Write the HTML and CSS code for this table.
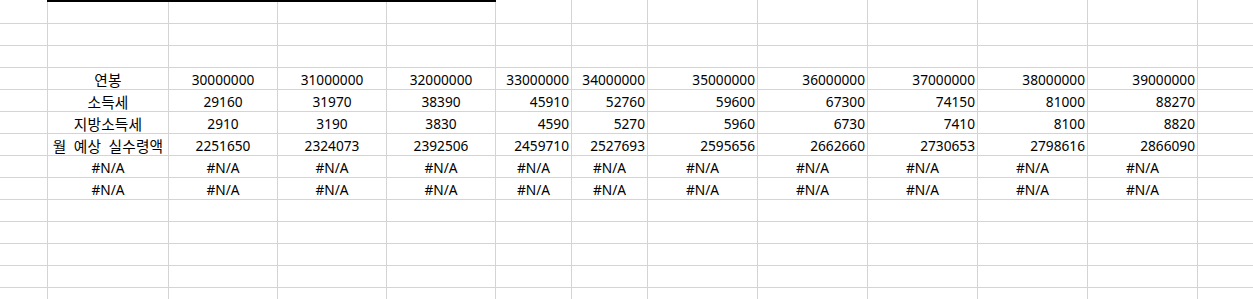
FILE: index.html
```html
<!DOCTYPE html>
<html lang="ko">
<head>
<meta charset="utf-8">
<title>Sheet</title>
<link rel="stylesheet" href="styles.css">
</head>
<body>
<div class="sheet">
  <!-- row 0 -->
  <div class="c"></div><div class="c a2"></div><div class="c a3"></div><div class="c a4"></div><div class="c a5"></div><div class="c"></div><div class="c"></div><div class="c"></div><div class="c"></div><div class="c"></div><div class="c"></div><div class="c"></div><div class="c"></div>
  <div class="topline"></div>
  <!-- row 1 -->
  <div class="c"></div><div class="c"></div><div class="c"></div><div class="c"></div><div class="c"></div><div class="c"></div><div class="c"></div><div class="c"></div><div class="c"></div><div class="c"></div><div class="c"></div><div class="c"></div><div class="c"></div>
  <!-- row 2 -->
  <div class="c"></div><div class="c"></div><div class="c"></div><div class="c"></div><div class="c"></div><div class="c"></div><div class="c"></div><div class="c"></div><div class="c"></div><div class="c"></div><div class="c"></div><div class="c"></div><div class="c"></div>
  <!-- 연봉 -->
  <div class="c"></div>
  <div class="c ctr ko">연봉</div>
  <div class="c ctr">30000000</div><div class="c ctr">31000000</div><div class="c ctr">32000000</div>
  <div class="c num">33000000</div><div class="c num">34000000</div><div class="c num">35000000</div><div class="c num">36000000</div><div class="c num">37000000</div><div class="c num">38000000</div><div class="c num">39000000</div>
  <div class="c"></div>
  <!-- 소득세 -->
  <div class="c"></div>
  <div class="c ctr ko">소득세</div>
  <div class="c ctr">29160</div><div class="c ctr">31970</div><div class="c ctr">38390</div>
  <div class="c num">45910</div><div class="c num">52760</div><div class="c num">59600</div><div class="c num">67300</div><div class="c num">74150</div><div class="c num">81000</div><div class="c num">88270</div>
  <div class="c"></div>
  <!-- 지방소득세 -->
  <div class="c"></div>
  <div class="c ctr ko">지방소득세</div>
  <div class="c ctr">2910</div><div class="c ctr">3190</div><div class="c ctr">3830</div>
  <div class="c num">4590</div><div class="c num">5270</div><div class="c num">5960</div><div class="c num">6730</div><div class="c num">7410</div><div class="c num">8100</div><div class="c num">8820</div>
  <div class="c"></div>
  <!-- 월 예상 실수령액 -->
  <div class="c"></div>
  <div class="c ctr ko">월 예상 실수령액</div>
  <div class="c ctr">2251650</div><div class="c ctr">2324073</div><div class="c ctr">2392506</div>
  <div class="c num">2459710</div><div class="c num">2527693</div><div class="c num">2595656</div><div class="c num">2662660</div><div class="c num">2730653</div><div class="c num">2798616</div><div class="c num">2866090</div>
  <div class="c"></div>
  <!-- #N/A -->
  <div class="c"></div>
  <div class="c ctr">#N/A</div><div class="c ctr">#N/A</div><div class="c ctr">#N/A</div><div class="c ctr">#N/A</div><div class="c ctr">#N/A</div><div class="c ctr">#N/A</div><div class="c ctr">#N/A</div><div class="c ctr">#N/A</div><div class="c ctr">#N/A</div><div class="c ctr">#N/A</div><div class="c ctr">#N/A</div>
  <div class="c"></div>
  <!-- #N/A -->
  <div class="c"></div>
  <div class="c ctr">#N/A</div><div class="c ctr">#N/A</div><div class="c ctr">#N/A</div><div class="c ctr">#N/A</div><div class="c ctr">#N/A</div><div class="c ctr">#N/A</div><div class="c ctr">#N/A</div><div class="c ctr">#N/A</div><div class="c ctr">#N/A</div><div class="c ctr">#N/A</div><div class="c ctr">#N/A</div>
  <div class="c"></div>
  <!-- empty rows -->
  <div class="c"></div><div class="c"></div><div class="c"></div><div class="c"></div><div class="c"></div><div class="c"></div><div class="c"></div><div class="c"></div><div class="c"></div><div class="c"></div><div class="c"></div><div class="c"></div><div class="c"></div>
  <div class="c"></div><div class="c"></div><div class="c"></div><div class="c"></div><div class="c"></div><div class="c"></div><div class="c"></div><div class="c"></div><div class="c"></div><div class="c"></div><div class="c"></div><div class="c"></div><div class="c"></div>
  <div class="c"></div><div class="c"></div><div class="c"></div><div class="c"></div><div class="c"></div><div class="c"></div><div class="c"></div><div class="c"></div><div class="c"></div><div class="c"></div><div class="c"></div><div class="c"></div><div class="c"></div>
  <div class="c"></div><div class="c"></div><div class="c"></div><div class="c"></div><div class="c"></div><div class="c"></div><div class="c"></div><div class="c"></div><div class="c"></div><div class="c"></div><div class="c"></div><div class="c"></div><div class="c"></div>
  <div class="c"></div><div class="c"></div><div class="c"></div><div class="c"></div><div class="c"></div><div class="c"></div><div class="c"></div><div class="c"></div><div class="c"></div><div class="c"></div><div class="c"></div><div class="c"></div><div class="c"></div>
</div>
</body>
</html>
```

FILE: styles.css
```css
html, body {
  margin: 0;
  padding: 0;
  background: #ffffff;
  overflow: hidden;
}

.sheet {
  display: grid;
  grid-template-columns: 47px 120px 108px 108px 108px 75px 75px 109px 109px 109px 109px 109px 1fr;
  grid-template-rows: 23px;
  grid-auto-rows: 21px;
  gap: 1px;
  background: #d4d4d4;
  width: 1253px;
  height: 299px;
  overflow: hidden;
  font-family: "Noto Sans", "Noto Sans CJK KR", sans-serif;
  font-size: 13.7px;
  color: #000000;
}

.a2 { grid-row: 1; grid-column: 2; }
.a3 { grid-row: 1; grid-column: 3; }
.a4 { grid-row: 1; grid-column: 4; }
.a5 { grid-row: 1; grid-column: 5; }

.topline {
  grid-row: 1;
  grid-column: 2 / 6;
  align-self: start;
  height: 2px;
  margin: 0 -1px;
  background: #000000;
  z-index: 1;
}

.c {
  background: #ffffff;
  display: flex;
  align-items: flex-end;
  white-space: nowrap;
  line-height: 19px;
  min-width: 0;
}

.ctr {
  justify-content: center;
}

.num {
  justify-content: flex-end;
  padding-right: 2px;
}

.ko {
  font-family: "Noto Sans CJK KR", sans-serif;
  font-size: 14.7px;
  letter-spacing: 0.2px;
  word-spacing: 3px;
}
```
